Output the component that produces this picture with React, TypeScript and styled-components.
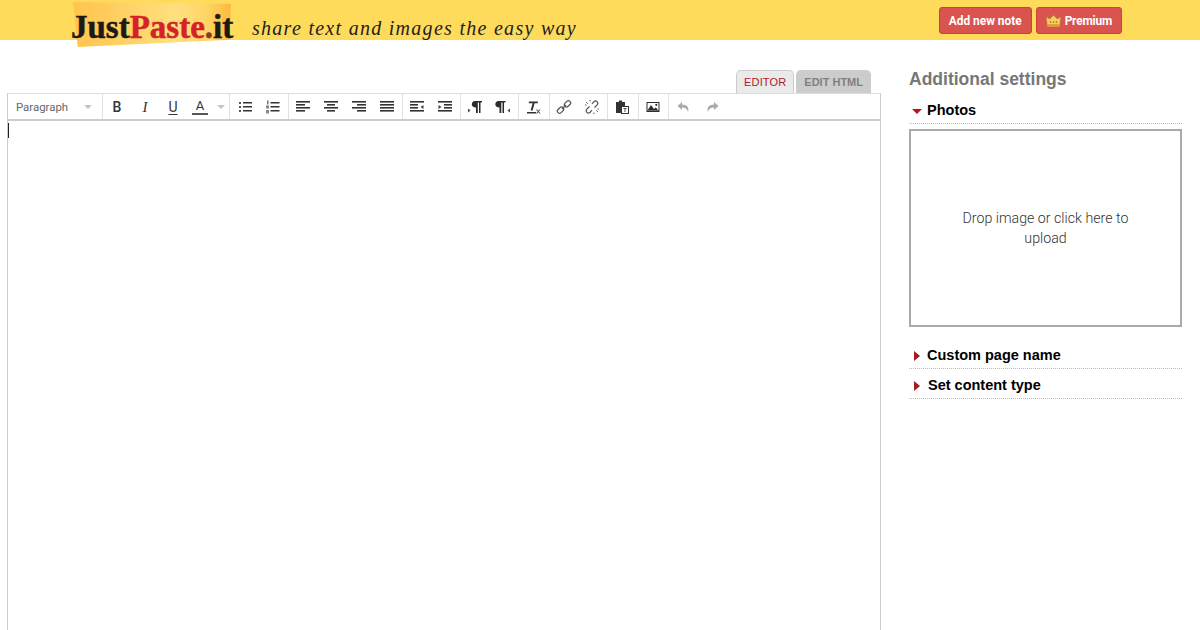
import React from "react";
import styled, { createGlobalStyle } from "styled-components";

const Global = createGlobalStyle`
html, body {
  margin: 0;
  padding: 0;
  background: #fff;
  overflow: hidden;
  height: 630px;
}
`;

const Bars = ({ rows }: { rows: number[][] }) => (
  <>
    {rows.map((r, i) => (
      <rect key={i} x={r[0]} y={2 + i * 3} width={r[1]} height="1.6" fill="#333" />
    ))}
  </>
);

const Icon = ({ children }: { children: React.ReactNode }) => (
  <svg width="16" height="16" viewBox="0 0 16 16">{children}</svg>
);

const icons: Record<string, React.ReactNode> = {
  bullist: (
    <>
      <rect x="3" y="3" width="2" height="2" fill="#555" />
      <rect x="3" y="7" width="2" height="2" fill="#555" />
      <rect x="3" y="11" width="2" height="2" fill="#555" />
      <rect x="7" y="3" width="9" height="1.5" fill="#333" />
      <rect x="7" y="7" width="9" height="1.5" fill="#333" />
      <rect x="7" y="11" width="9" height="1.5" fill="#333" />
    </>
  ),
  numlist: (
    <>
      <rect x="3" y="1.5" width="1.5" height="4" fill="#777" />
      <rect x="2" y="6.5" width="3" height="3" fill="#888" />
      <rect x="2" y="11" width="3" height="3.5" fill="#888" />
      <rect x="6.5" y="3" width="9" height="1.5" fill="#333" />
      <rect x="6.5" y="7" width="9" height="1.5" fill="#333" />
      <rect x="6.5" y="11" width="9" height="1.5" fill="#333" />
    </>
  ),
  left: <Bars rows={[[1, 14], [1, 9], [1, 14], [1, 9]]} />,
  center: <Bars rows={[[1, 14], [4, 8], [1, 14], [4, 8]]} />,
  right: <Bars rows={[[1, 14], [6, 9], [1, 14], [6, 9]]} />,
  justify: <Bars rows={[[1, 14], [1, 14], [1, 14], [1, 14]]} />,
  outdent: (
    <>
      <Bars rows={[[1, 14], [1, 8], [1, 8], [1, 14]]} />
      <path d="M14.5 6 L11.5 8 L14.5 10 Z" fill="#444" />
    </>
  ),
  indent: (
    <>
      <Bars rows={[[1, 14], [7, 8], [7, 8], [1, 14]]} />
      <path d="M1.5 6 L4.5 8 L1.5 10 Z" fill="#444" />
    </>
  ),
  ltr: (
    <>
      <path d="M8 2 H15 V3.5 H13.5 V14 H12 V3.5 H10.8 V14 H9 V8.5 C6 8.5 4.8 7 4.8 5.3 C4.8 3.4 6.2 2 8 2 Z" fill="#2c2c2c" />
      <path d="M1 9.5 L3.5 11.5 L1 13.5 Z" fill="#445" />
    </>
  ),
  rtl: (
    <>
      <path d="M3.5 2 H10.5 V3.5 H9 V14 H7.5 V3.5 H6.3 V14 H4.5 V8.5 C1.5 8.5 .3 7 .3 5.3 C.3 3.4 1.7 2 3.5 2 Z" fill="#2c2c2c" />
      <path d="M15 9.5 L12.5 11.5 L15 13.5 Z" fill="#445" />
    </>
  ),
  clear: (
    <>
      <path d="M4 2.5 H13 L12.7 4.2 H9.6 L7.6 11.5 H5.6 L7.6 4.2 H3.7 Z" fill="#333" />
      <rect x="2" y="13" width="9" height="1.5" fill="#333" />
      <path d="M11.5 10.5 L15 14.5 M15 10.5 L11.5 14.5" stroke="#555" strokeWidth="1.1" />
    </>
  ),
  link: (
    <g fill="none" stroke="#555" strokeWidth="1.25">
      <rect x="1" y="9" width="7" height="4.4" rx="2.2" transform="rotate(-45 4.5 11.2)" />
      <rect x="8" y="2.6" width="7" height="4.4" rx="2.2" transform="rotate(-45 11.5 4.8)" />
      <path d="M6 10 L10 6" />
    </g>
  ),
  unlink: (
    <g fill="none" stroke="#555" strokeWidth="1.25">
      <path d="M5.5 7.5 L2.6 10.4 a2.3 2.3 0 0 0 3.2 3.2 L8 11.2" />
      <path d="M10.5 8.5 L13.4 5.6 a2.3 2.3 0 0 0 -3.2 -3.2 L8 4.8" />
      <path d="M2 3 L4 5 M1 6 H3 M6 1 V3 M14 13 L12 11 M15 10 H13 M10 15 V13" strokeWidth="1" strokeDasharray="1.2 .6" />
    </g>
  ),
  paste: (
    <>
      <path d="M2 3 H5 V1.5 H8 V3 H11 V7 H7 V14 H2 Z" fill="#333" />
      <rect x="7.5" y="7.5" width="7" height="7" fill="#fff" stroke="#333" strokeWidth="1" />
      <path d="M9.5 9.5 H12.5 M11 9.5 V13" stroke="#555" strokeWidth="1" />
    </>
  ),
  image: (
    <>
      <rect x="1.5" y="3" width="13" height="10" fill="#2c2c2c" />
      <rect x="2.5" y="4" width="11" height="7.6" fill="#fff" />
      <path d="M2.5 11.6 L6 6 L9 10 L10.8 8.5 L13.5 11.6 Z" fill="#2c2c2c" />
      <circle cx="11.3" cy="5.8" r="1.1" fill="#2c2c2c" />
    </>
  ),
  undo: <path d="M6 3 L1.5 7 L6 11 V8.5 C9 8.5 11 9.5 12 13 C13.5 8.5 11 5.5 6 5.5 Z" fill="#aaa" />,
  redo: <path d="M10 3 L14.5 7 L10 11 V8.5 C7 8.5 5 9.5 4 13 C2.5 8.5 5 5.5 10 5.5 Z" fill="#aaa" />,
};

const App = () => {
  return (
    <>
      <Global />
      <Header>
        <LogoWrap>
          <Logo>
            Just<LogoRed>Paste</LogoRed><LogoDot>.</LogoDot>it
          </Logo>
        </LogoWrap>
        <Tagline>share text and images the easy way</Tagline>
        <HeaderButtons>
          <RedButton>Add new note</RedButton>
          <RedButton>
            <svg width="15" height="12" viewBox="0 0 15 12">
              <path d="M.3 2 L3.8 4 L7.5 .3 L11.2 4 L14.7 2 L13.8 10 H1.2 Z" fill="#f6cf62" stroke="#b5852f" strokeWidth=".6" />
              <rect x="1.2" y="9.3" width="12.6" height="2.6" fill="#dd9f38" />
              <circle cx="4.5" cy="7" r=".8" fill="#c0392b" />
              <circle cx="7.5" cy="7" r=".8" fill="#c0392b" />
              <circle cx="10.5" cy="7" r=".8" fill="#c0392b" />
            </svg>
            <PremiumLabel>Premium</PremiumLabel>
          </RedButton>
        </HeaderButtons>
      </Header>

      <Main>
        <EditorColumn>
          <Tabs>
            <Tab active>EDITOR</Tab>
            <Tab>EDIT HTML</Tab>
          </Tabs>
          <Toolbar>
            <Group width={95}>
              <Select>
                Paragraph
                <CaretMark />
              </Select>
            </Group>
            <Group width={127} start>
              <Letter bold>B</Letter>
              <Letter italic>I</Letter>
              <Letter underline>U</Letter>
              <ColorLetter>A</ColorLetter>
              <CaretMark />
            </Group>
            <Group width={59}>
              <Tool><Icon>{icons.bullist}</Icon></Tool>
              <Tool><Icon>{icons.numlist}</Icon></Tool>
            </Group>
            <Group width={114}>
              <Tool><Icon>{icons.left}</Icon></Tool>
              <Tool><Icon>{icons.center}</Icon></Tool>
              <Tool><Icon>{icons.right}</Icon></Tool>
              <Tool><Icon>{icons.justify}</Icon></Tool>
            </Group>
            <Group width={58}>
              <Tool><Icon>{icons.outdent}</Icon></Tool>
              <Tool><Icon>{icons.indent}</Icon></Tool>
            </Group>
            <Group width={58}>
              <Tool><Icon>{icons.ltr}</Icon></Tool>
              <Tool><Icon>{icons.rtl}</Icon></Tool>
            </Group>
            <Group width={31}>
              <Tool><Icon>{icons.clear}</Icon></Tool>
            </Group>
            <Group width={58}>
              <Tool><Icon>{icons.link}</Icon></Tool>
              <Tool><Icon>{icons.unlink}</Icon></Tool>
            </Group>
            <Group width={31}>
              <Tool><Icon>{icons.paste}</Icon></Tool>
            </Group>
            <Group width={30}>
              <Tool><Icon>{icons.image}</Icon></Tool>
            </Group>
            <Group width={60} last>
              <Tool><Icon>{icons.undo}</Icon></Tool>
              <Tool><Icon>{icons.redo}</Icon></Tool>
            </Group>
          </Toolbar>
          <EditArea>
            <TextCursor />
          </EditArea>
        </EditorColumn>

        <Sidebar>
          <SideTitle>Additional settings</SideTitle>
          <Section>
            <ArrowDown />
            Photos
          </Section>
          <DropZone>
            <DropText>Drop image or click here to upload</DropText>
          </DropZone>
          <Collapsed>
            <ArrowRight />
            Custom page name
          </Collapsed>
          <Collapsed>
            <ArrowRight />
            <SetType>Set content type</SetType>
          </Collapsed>
        </Sidebar>
      </Main>
    </>
  );
};

export default App;

const Header = styled.div`
height: 40px;
background-color: #ffdb5c;
display: flex;
align-items: flex-start;
padding: 0 78px 0 71px;
`;

const LogoWrap = styled.div`
position: relative;
width: 165px;
height: 47px;
flex-shrink: 0;

&::before {
  content: "";
  position: absolute;
  left: 2px;
  top: 2px;
  width: 158px;
  height: 45px;
  background: linear-gradient(90deg, #ffc44e 0%, #ffd063 30%, #ffe07e 65%, #ffd466 85%, #fcb93c 100%);
  clip-path: polygon(0 0, 100% 4%, 99% 84%, 3% 100%);
}
`;

const Logo = styled.div`
position: relative;
padding-top: 11px;
font-family: "Liberation Serif", serif;
font-weight: 700;
font-size: 33px;
line-height: 32px;
-webkit-text-stroke: 0.5px currentColor;
color: #1c1a14;
white-space: nowrap;
`;

const LogoRed = styled.span`
color: #d3222a;
`;

const LogoDot = styled.span`
color: #8a3a20;
`;

const Tagline = styled.div`
margin-left: 16px;
padding-top: 15px;
font-family: "Liberation Serif", serif;
font-style: italic;
font-size: 20px;
line-height: 26px;
letter-spacing: 1.28px;
color: #222;
white-space: nowrap;
`;

const HeaderButtons = styled.div`
margin-left: auto;
margin-top: 7px;
display: flex;
gap: 4px;
`;

const RedButton = styled.div`
height: 25px;
padding: 0 9px;
background-color: #d9534f;
border: 1px solid #d43f3a;
border-radius: 3px;
display: flex;
align-items: center;
gap: 4px;
font-family: Roboto, sans-serif;
font-weight: 700;
font-size: 11.9px;
color: #fff;
`;

const PremiumLabel = styled.span`
letter-spacing: -0.2px;
`;

const Main = styled.div`
display: flex;
padding-left: 7px;
`;

const EditorColumn = styled.div`
width: 874px;
flex-shrink: 0;
padding-top: 30px;
`;

const Tabs = styled.div`
height: 23px;
display: flex;
justify-content: flex-end;
gap: 2px;
padding-right: 10px;
`;

const Tab = styled.div<{ active?: boolean }>`
height: 23px;
box-sizing: border-box;
padding: 0 7px;
border: 1px solid #ccc;
border-bottom: 0;
border-radius: 5px 5px 0 0;
background-color: ${(p) => (p.active ? "#eaeaea" : "#ccc")};
color: ${(p) => (p.active ? "#b2182b" : "#808080")};
font-family: "Liberation Sans", sans-serif;
font-weight: ${(p) => (p.active ? 400 : 700)};
font-size: 11px;
letter-spacing: ${(p) => (p.active ? "0.15px" : "0")};
line-height: 22px;
`;

const Toolbar = styled.div`
height: 28px;
box-sizing: border-box;
display: flex;
border: 1px solid #ccc;
border-bottom: 2px solid #ccc;
border-top: 1px solid #ddd;
background: #fff;
`;

const Group = styled.div<{ width: number; last?: boolean; start?: boolean }>`
width: ${(p) => p.width}px;
flex-shrink: 0;
box-sizing: border-box;
display: flex;
align-items: center;
justify-content: ${(p) => (p.last || p.start ? "flex-start" : "space-around")};
padding: ${(p) => (p.last ? "0 0 0 1px" : p.start ? "0" : "0 2px 0 0")};
border-right: ${(p) => (p.last ? "0" : "1px solid #e2e2e2")};
`;

const Select = styled.div`
flex: 1;
display: flex;
justify-content: space-between;
align-items: center;
padding: 0 8px 0 8px;
font-family: Roboto, sans-serif;
font-size: 11.4px;
color: #676767;
`;

const CaretMark = styled.span`
width: 0;
height: 0;
border-left: 4px solid transparent;
border-right: 4px solid transparent;
border-top: 4px solid #c4c4c4;
display: inline-block;
`;

const Tool = styled.div`
width: 28px;
height: 24px;
flex-shrink: 0;
display: flex;
align-items: center;
justify-content: center;
`;

const Letter = styled.div<{ bold?: boolean; italic?: boolean; underline?: boolean }>`
width: 28px;
text-align: center;
font-family: ${(p) => (p.italic ? '"Liberation Serif", serif' : "Roboto, sans-serif")};
font-size: ${(p) => (p.italic ? 15 : 14)}px;
line-height: 20px;
color: #333;
font-weight: ${(p) => (p.bold ? 500 : 400)};
font-style: ${(p) => (p.italic ? "italic" : "normal")};
text-decoration: ${(p) => (p.underline ? "underline" : "none")};
text-underline-offset: 2px;
`;

const ColorLetter = styled.div`
width: 16px;
margin-left: 5px;
margin-right: 9px;
text-align: center;
font-family: Roboto, sans-serif;
font-size: 13px;
line-height: 15px;
color: #333;
border-bottom: 2px solid #555;
`;

const EditArea = styled.div`
height: 520px;
box-sizing: border-box;
padding: 2px 0 0 0;
border-left: 1px solid #ccc;
border-right: 1px solid #ccc;
`;

const TextCursor = styled.div`
width: 1px;
height: 15px;
background: #222;
`;

const Sidebar = styled.div`
width: 273px;
margin-left: 28px;
padding-top: 28px;
`;

const SideTitle = styled.div`
font-family: "Liberation Sans", sans-serif;
font-weight: 700;
font-size: 17.5px;
line-height: 22px;
color: #777;
margin-bottom: 10px;
`;

const Section = styled.div`
height: 24px;
display: flex;
align-items: center;
gap: 5px;
padding: 0 0 4px 3px;
box-sizing: border-box;
border-bottom: 1px dotted #bbb;
font-family: "Liberation Sans", sans-serif;
font-weight: 700;
font-size: 14.5px;
color: #000;
`;

const ArrowDown = styled.span`
width: 0;
height: 0;
margin-top: 3px;
border-left: 5px solid transparent;
border-right: 5px solid transparent;
border-top: 5px solid #b81414;
`;

const ArrowRight = styled.span`
width: 0;
height: 0;
margin-left: 2px;
margin-right: 2px;
margin-top: 3px;
border-top: 5px solid transparent;
border-bottom: 5px solid transparent;
border-left: 6px solid #a51c1c;
`;

const DropZone = styled.div`
height: 198px;
box-sizing: border-box;
margin-top: 5px;
margin-bottom: 12px;
border: 2px solid #aaa;
display: flex;
align-items: center;
justify-content: center;
text-align: center;
`;

const DropText = styled.div`
width: 180px;
font-family: Roboto, sans-serif;
font-weight: 300;
font-size: 14.2px;
line-height: 20px;
color: #333;
`;

const Collapsed = styled.div`
height: 30px;
box-sizing: border-box;
display: flex;
align-items: center;
gap: 5px;
padding: 2px 0 0 3px;
border-bottom: 1px dotted #bbb;
font-family: "Liberation Sans", sans-serif;
font-weight: 700;
font-size: 14.5px;
color: #000;
`;

const SetType = styled.span`
margin-left: 1px;
`;
